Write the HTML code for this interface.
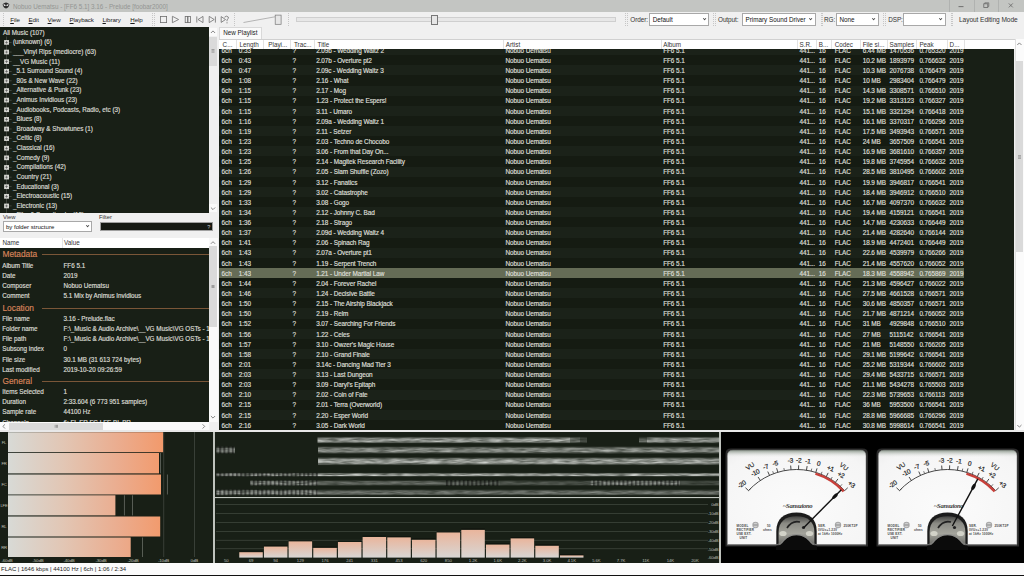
<!DOCTYPE html><html><head><meta charset='utf-8'><style>*{margin:0;padding:0;box-sizing:border-box}
html,body{width:1024px;height:576px;overflow:hidden;background:#f0f0f0;font-family:"Liberation Sans",sans-serif;font-size:6.3px;color:#222;position:relative}
div,span{position:absolute;white-space:nowrap}
.dark{background:#181f16;color:#cfd0c8;overflow:hidden}
#titlebar{left:0;top:0;width:1024px;height:11.5px;background:#c3c5c2}
#title{left:13px;top:2.8px;font-size:6.3px;color:#939593}
.wbtn{top:0;height:11.6px;width:25px;border-left:0.6px solid #b0b2b0}
#toolbar{left:0;top:11.6px;width:1024px;height:15.6px;background:#f0f0f0}
.menu{top:16.0px;font-size:6.2px;color:#1a1a1a;letter-spacing:-0.1px}
.menu u{text-decoration:underline;text-decoration-thickness:0.5px;text-underline-offset:1.3px}
.sep{width:0;top:13px;height:13px;border-left:0.7px dotted #c6c6c6}
.tbicon{top:15.8px}
.lbl{top:15.8px;font-size:6.4px;color:#333;letter-spacing:-0.08px}
.dd{top:13.4px;height:12.2px;background:#fff;border:0.7px solid #a8a8a8;font-size:6.3px;color:#111;padding-left:2.5px;line-height:12.2px}
.dd i{position:absolute;right:2.6px;top:2.6px;width:3.2px;height:3.2px;border-right:0.8px solid #444;border-bottom:0.8px solid #444;transform:rotate(45deg) scale(0.8,0.8);transform-origin:50% 50%}
#tree{left:0;top:27.2px;width:208.5px;height:185.4px}
.ti{font-size:6.3px;color:#d8d9d1}
.pbox{left:4.1px;width:4.9px;height:4.7px;background:#d4d5cf;-webkit-text-stroke:0}
.pbox:before{content:'';position:absolute;left:1.1px;top:2.1px;width:2.7px;height:0.55px;background:#555}
.pbox:after{content:'';position:absolute;left:2.2px;top:1px;width:0.55px;height:2.7px;background:#555}
.tdash{left:9px;width:2.6px;height:0.5px;background:#6a6e66}
.tline{width:0.5px;background:#5e625a}
#props{left:0;top:247.5px;width:208.5px;height:174.5px}
.ph{left:2.5px;font-size:8.3px;color:#d6835a}
.phl{left:42px;width:170px;height:0.7px;background:#7a5638}
.pn{left:2.2px;font-size:6.3px;color:#d8d9d1}
.pv{left:63.5px;font-size:6.3px;color:#d8d9d1}
#pl{left:219px;top:49.2px;width:795.3px;height:380.8px}
.row{left:0;width:745.2px;height:10.133px;background:#1b2219}
.row.odd{background:#151b12}
.row.sel{background:#656c56}
.row span{top:1.8px;font-size:6.4px;color:#dcddd5;letter-spacing:-0.08px}
.sb{background:#f0f0f0}
.thumb{background:#dadada}
.hd{top:41.3px;font-size:6.3px;color:#333}
.hdv{top:40px;width:0.7px;height:9px;background:#e2e2e2}

.dark div,.dark span{-webkit-text-stroke:0.18px currentColor}
</style></head><body>
<div id="titlebar"></div>
<svg style="position:absolute;left:1.5px;top:2.2px" width="8" height="7" viewBox="0 0 8 7"><path d="M0.6 2.2 Q4 -1.2 7.4 2.2 Q7 5.6 4 6.6 Q1 5.6 0.6 2.2Z" fill="#2e2e2e"/><ellipse cx="2.5" cy="3.1" rx="1.2" ry="0.65" fill="#f2f2f2" transform="rotate(30 2.5 3.1)"/><ellipse cx="5.5" cy="3.1" rx="1.2" ry="0.65" fill="#f2f2f2" transform="rotate(-30 5.5 3.1)"/></svg>
<div id="title">Nobuo Uematsu - [FF6 5.1] 3.16 - Prelude [foobar2000]</div>
<div class="wbtn" style="left:949px"></div><div class="wbtn" style="left:974.4px"></div><div class="wbtn" style="left:998.4px;width:25.6px"></div>
<svg style="position:absolute;left:949px;top:0" width="75" height="12" viewBox="0 0 75 12">
 <rect x="9.5" y="6.2" width="5" height="0.9" fill="#666"/>
 <rect x="34.8" y="3.8" width="4" height="3.6" fill="none" stroke="#666" stroke-width="0.8"/><path d="M35.8 3.8 V2.8 H39.8 V6.4 H38.8" fill="none" stroke="#666" stroke-width="0.7"/>
 <path d="M59.8 3.4 L63.8 7.4 M63.8 3.4 L59.8 7.4" stroke="#666" stroke-width="0.8"/>
</svg>
<div id="toolbar"></div>
<div class="sep" style="left:2.5px"></div>
<div class="menu" style="left:10.2px"><u>F</u>ile</div>
<div class="menu" style="left:28.5px"><u>E</u>dit</div>
<div class="menu" style="left:47.6px"><u>V</u>iew</div>
<div class="menu" style="left:69.5px"><u>P</u>layback</div>
<div class="menu" style="left:102.5px"><u>L</u>ibrary</div>
<div class="menu" style="left:130.3px"><u>H</u>elp</div>
<div class="sep" style="left:151.6px"></div><div class="sep" style="left:153.8px"></div>
<svg style="position:absolute;left:158px;top:14px" width="75" height="11" viewBox="0 0 75 11">
 <g fill="none" stroke="#6e6e6e" stroke-width="0.8">
  <rect x="2.4" y="2.4" width="6.2" height="6.2"/>
  <path d="M14.4 2.3 L20.6 5.5 L14.4 8.7 Z"/>
  <rect x="27.2" y="2.4" width="2.4" height="6.2"/><rect x="30.0" y="2.4" width="2.4" height="6.2"/>
  <path d="M38.8 2.4 V8.6 M45 2.4 L40 5.5 L45 8.6 Z"/>
  <path d="M51.2 2.4 L56.2 5.5 L51.2 8.6 Z M57.4 2.4 V8.6"/>
  <path d="M63.2 2.6 L67.5 5.5 L63.2 8.4 Z M66.5 3.2 Q68.5 1.2 70.3 3 Q71 4.6 69 5.7 V7.2 M69 8.2 V9.4"/>
 </g>
</svg>
<div class="sep" style="left:234.3px"></div>
<svg style="position:absolute;left:240px;top:13px" width="45" height="13" viewBox="0 0 45 13"><path d="M3.5 9.5 L35 3.8" stroke="#9a9a9a" stroke-width="0.7"/><rect x="35.2" y="2.1" width="5.9" height="9.2" fill="#e6e6e6" stroke="#777" stroke-width="0.7"/></svg>
<div class="sep" style="left:288.3px"></div>
<div style="left:296.2px;top:17.2px;width:320.3px;height:4.4px;background:#e7e7e7;border:0.7px solid #cfcfcf"></div>
<div style="left:431px;top:15px;width:6.7px;height:9.5px;background:#e6e6e6;border:0.7px solid #777"></div>
<div class="sep" style="left:625.4px"></div><div class="sep" style="left:626.8px"></div>
<div class="lbl" style="left:630.3px">Order:</div>
<div class="dd" style="left:649.3px;width:60.1px">Default<i></i></div>
<div class="sep" style="left:713.3px"></div><div class="sep" style="left:715px"></div>
<div class="lbl" style="left:718px">Output:</div>
<div class="dd" style="left:742px;width:73.5px">Primary Sound Driver<i></i></div>
<div class="sep" style="left:820.5px"></div><div class="sep" style="left:822px"></div>
<div class="lbl" style="left:824px">RG:</div>
<div class="dd" style="left:836px;width:42.8px">None<i></i></div>
<div class="sep" style="left:883px"></div><div class="sep" style="left:884.5px"></div>
<div class="lbl" style="left:888.2px">DSP:</div>
<div class="dd" style="left:903px;width:42.5px"><i></i></div>
<div class="sep" style="left:950.5px"></div><div class="sep" style="left:952px"></div>
<div class="lbl" style="left:959px;font-size:6.6px">Layout Editing Mode</div>
<div id='tree' class='dark'><div class='ti' style='top:1.4px;left:3px'>All Music (107)</div><svg style='position:absolute;left:0;top:0' width='20' height='186' viewBox='0 0 20 186'><rect x='6.25' y='9.5' width='0.55' height='180' fill='#5e625a'/><rect x='4.1' y='13.05' width='4.9' height='4.7' fill='#d4d5cf'/><rect x='5.2' y='15.15' width='2.7' height='0.55' fill='#4a4a4a'/><rect x='6.27' y='14.05' width='0.55' height='2.7' fill='#4a4a4a'/><rect x='9' y='15.15' width='2.6' height='0.5' fill='#6a6e66'/><rect x='4.1' y='22.67' width='4.9' height='4.7' fill='#d4d5cf'/><rect x='5.2' y='24.77' width='2.7' height='0.55' fill='#4a4a4a'/><rect x='6.27' y='23.67' width='0.55' height='2.7' fill='#4a4a4a'/><rect x='9' y='24.77' width='2.6' height='0.5' fill='#6a6e66'/><rect x='4.1' y='32.29' width='4.9' height='4.7' fill='#d4d5cf'/><rect x='5.2' y='34.39' width='2.7' height='0.55' fill='#4a4a4a'/><rect x='6.27' y='33.29' width='0.55' height='2.7' fill='#4a4a4a'/><rect x='9' y='34.39' width='2.6' height='0.5' fill='#6a6e66'/><rect x='4.1' y='41.91' width='4.9' height='4.7' fill='#d4d5cf'/><rect x='5.2' y='44.01' width='2.7' height='0.55' fill='#4a4a4a'/><rect x='6.27' y='42.91' width='0.55' height='2.7' fill='#4a4a4a'/><rect x='9' y='44.01' width='2.6' height='0.5' fill='#6a6e66'/><rect x='4.1' y='51.53' width='4.9' height='4.7' fill='#d4d5cf'/><rect x='5.2' y='53.63' width='2.7' height='0.55' fill='#4a4a4a'/><rect x='6.27' y='52.53' width='0.55' height='2.7' fill='#4a4a4a'/><rect x='9' y='53.63' width='2.6' height='0.5' fill='#6a6e66'/><rect x='4.1' y='61.15' width='4.9' height='4.7' fill='#d4d5cf'/><rect x='5.2' y='63.25' width='2.7' height='0.55' fill='#4a4a4a'/><rect x='6.27' y='62.15' width='0.55' height='2.7' fill='#4a4a4a'/><rect x='9' y='63.25' width='2.6' height='0.5' fill='#6a6e66'/><rect x='4.1' y='70.77' width='4.9' height='4.7' fill='#d4d5cf'/><rect x='5.2' y='72.87' width='2.7' height='0.55' fill='#4a4a4a'/><rect x='6.27' y='71.77' width='0.55' height='2.7' fill='#4a4a4a'/><rect x='9' y='72.87' width='2.6' height='0.5' fill='#6a6e66'/><rect x='4.1' y='80.39' width='4.9' height='4.7' fill='#d4d5cf'/><rect x='5.2' y='82.49' width='2.7' height='0.55' fill='#4a4a4a'/><rect x='6.27' y='81.39' width='0.55' height='2.7' fill='#4a4a4a'/><rect x='9' y='82.49' width='2.6' height='0.5' fill='#6a6e66'/><rect x='4.1' y='90.01' width='4.9' height='4.7' fill='#d4d5cf'/><rect x='5.2' y='92.11' width='2.7' height='0.55' fill='#4a4a4a'/><rect x='6.27' y='91.01' width='0.55' height='2.7' fill='#4a4a4a'/><rect x='9' y='92.11' width='2.6' height='0.5' fill='#6a6e66'/><rect x='4.1' y='99.63' width='4.9' height='4.7' fill='#d4d5cf'/><rect x='5.2' y='101.73' width='2.7' height='0.55' fill='#4a4a4a'/><rect x='6.27' y='100.63' width='0.55' height='2.7' fill='#4a4a4a'/><rect x='9' y='101.73' width='2.6' height='0.5' fill='#6a6e66'/><rect x='4.1' y='109.25' width='4.9' height='4.7' fill='#d4d5cf'/><rect x='5.2' y='111.35' width='2.7' height='0.55' fill='#4a4a4a'/><rect x='6.27' y='110.25' width='0.55' height='2.7' fill='#4a4a4a'/><rect x='9' y='111.35' width='2.6' height='0.5' fill='#6a6e66'/><rect x='4.1' y='118.87' width='4.9' height='4.7' fill='#d4d5cf'/><rect x='5.2' y='120.97' width='2.7' height='0.55' fill='#4a4a4a'/><rect x='6.27' y='119.87' width='0.55' height='2.7' fill='#4a4a4a'/><rect x='9' y='120.97' width='2.6' height='0.5' fill='#6a6e66'/><rect x='4.1' y='128.49' width='4.9' height='4.7' fill='#d4d5cf'/><rect x='5.2' y='130.59' width='2.7' height='0.55' fill='#4a4a4a'/><rect x='6.27' y='129.49' width='0.55' height='2.7' fill='#4a4a4a'/><rect x='9' y='130.59' width='2.6' height='0.5' fill='#6a6e66'/><rect x='4.1' y='138.11' width='4.9' height='4.7' fill='#d4d5cf'/><rect x='5.2' y='140.21' width='2.7' height='0.55' fill='#4a4a4a'/><rect x='6.27' y='139.11' width='0.55' height='2.7' fill='#4a4a4a'/><rect x='9' y='140.21' width='2.6' height='0.5' fill='#6a6e66'/><rect x='4.1' y='147.73' width='4.9' height='4.7' fill='#d4d5cf'/><rect x='5.2' y='149.83' width='2.7' height='0.55' fill='#4a4a4a'/><rect x='6.27' y='148.73' width='0.55' height='2.7' fill='#4a4a4a'/><rect x='9' y='149.83' width='2.6' height='0.5' fill='#6a6e66'/><rect x='4.1' y='157.35' width='4.9' height='4.7' fill='#d4d5cf'/><rect x='5.2' y='159.45' width='2.7' height='0.55' fill='#4a4a4a'/><rect x='6.27' y='158.35' width='0.55' height='2.7' fill='#4a4a4a'/><rect x='9' y='159.45' width='2.6' height='0.5' fill='#6a6e66'/><rect x='4.1' y='166.97' width='4.9' height='4.7' fill='#d4d5cf'/><rect x='5.2' y='169.07' width='2.7' height='0.55' fill='#4a4a4a'/><rect x='6.27' y='167.97' width='0.55' height='2.7' fill='#4a4a4a'/><rect x='9' y='169.07' width='2.6' height='0.5' fill='#6a6e66'/><rect x='4.1' y='176.59' width='4.9' height='4.7' fill='#d4d5cf'/><rect x='5.2' y='178.69' width='2.7' height='0.55' fill='#4a4a4a'/><rect x='6.27' y='177.59' width='0.55' height='2.7' fill='#4a4a4a'/><rect x='9' y='178.69' width='2.6' height='0.5' fill='#6a6e66'/><rect x='4.1' y='186.21' width='4.9' height='4.7' fill='#d4d5cf'/><rect x='5.2' y='188.31' width='2.7' height='0.55' fill='#4a4a4a'/><rect x='6.27' y='187.21' width='0.55' height='2.7' fill='#4a4a4a'/><rect x='9' y='188.31' width='2.6' height='0.5' fill='#6a6e66'/></svg><div class='ti' style='top:11.10px;left:13px'>(unknown) (6)</div><div class='ti' style='top:20.72px;left:13px'>___Vinyl Rips (mediocre) (63)</div><div class='ti' style='top:30.34px;left:13px'>__VG Music (11)</div><div class='ti' style='top:39.96px;left:13px'>_5.1 Surround Sound (4)</div><div class='ti' style='top:49.58px;left:13px'>_80s &amp; New Wave (22)</div><div class='ti' style='top:59.20px;left:13px'>_Alternative &amp; Punk (23)</div><div class='ti' style='top:68.82px;left:13px'>_Animus Invidious (23)</div><div class='ti' style='top:78.44px;left:13px'>_Audiobooks, Podcasts, Radio, etc (3)</div><div class='ti' style='top:88.06px;left:13px'>_Blues (8)</div><div class='ti' style='top:97.68px;left:13px'>_Broadway &amp; Showtunes (1)</div><div class='ti' style='top:107.30px;left:13px'>_Celtic (8)</div><div class='ti' style='top:116.92px;left:13px'>_Classical (16)</div><div class='ti' style='top:126.54px;left:13px'>_Comedy (9)</div><div class='ti' style='top:136.16px;left:13px'>_Compilations (42)</div><div class='ti' style='top:145.78px;left:13px'>_Country (21)</div><div class='ti' style='top:155.40px;left:13px'>_Educational (3)</div><div class='ti' style='top:165.02px;left:13px'>_Electroacoustic (15)</div><div class='ti' style='top:174.64px;left:13px'>_Electronic (13)</div><div class='ti' style='top:184.26px;left:13px'>_Film &amp; Soundtracks (12)</div></div>
<div id='props' class='dark'><div class='ph' style='top:1.60px'>Metadata</div><div class='phl' style='top:6.60px'></div><div class='pn' style='top:14.60px'>Album Title</div><div class='pv' style='top:14.60px'>FF6 5.1</div><div class='pn' style='top:24.70px'>Date</div><div class='pv' style='top:24.70px'>2019</div><div class='pn' style='top:34.80px'>Composer</div><div class='pv' style='top:34.80px'>Nobuo Uematsu</div><div class='pn' style='top:44.90px'>Comment</div><div class='pv' style='top:44.90px'>5.1 Mix by Animus Invidious</div><div class='ph' style='top:55.10px'>Location</div><div class='phl' style='top:60.10px'></div><div class='pn' style='top:67.50px'>File name</div><div class='pv' style='top:67.50px'>3.16 - Prelude.flac</div><div class='pn' style='top:77.60px'>Folder name</div><div class='pv' style='top:77.60px'>F:\_Music &amp; Audio Archive\__VG Music\VG OSTs - 1988 - 199</div><div class='pn' style='top:87.70px'>File path</div><div class='pv' style='top:87.70px'>F:\_Music &amp; Audio Archive\__VG Music\VG OSTs - 1988 - 199</div><div class='pn' style='top:97.90px'>Subsong index</div><div class='pv' style='top:97.90px'>0</div><div class='pn' style='top:108.00px'>File size</div><div class='pv' style='top:108.00px'>30.1 MB (31 613 724 bytes)</div><div class='pn' style='top:118.10px'>Last modified</div><div class='pv' style='top:118.10px'>2019-10-20 09:26:59</div><div class='ph' style='top:128.30px'>General</div><div class='phl' style='top:133.30px'></div><div class='pn' style='top:140.70px'>Items Selected</div><div class='pv' style='top:140.70px'>1</div><div class='pn' style='top:150.80px'>Duration</div><div class='pv' style='top:150.80px'>2:33.604 (6 773 951 samples)</div><div class='pn' style='top:160.90px'>Sample rate</div><div class='pv' style='top:160.90px'>44100 Hz</div><div class='pn' style='top:171.00px'>Channels</div><div class='pv' style='top:171.00px'>6: FL FR FC LFE BL BR</div></div>
<div id='pl' class='dark'><div class='row' style='top:-4.200px'><span style='left:2.6px'>6ch</span><span style='left:19.8px'>0:33</span><span style='left:73.6px'>?</span><span style='left:97.2px'>2.09b - Wedding Waltz 2</span><span style='left:286.5px'>Nobuo Uematsu</span><span style='left:444.2px'>FF6 5.1</span><span style='left:580.5px'>441...</span><span style='left:599.8px'>16</span><span style='left:615.8px'>FLAC</span><span style='left:643.7px'>6.44 MB</span><span style='left:670.6px'>1470536</span><span style='left:700.4px'>0.765320</span><span style='left:730.6px'>2019</span></div><div class='row odd' style='top:5.933px'><span style='left:2.6px'>6ch</span><span style='left:19.8px'>0:43</span><span style='left:73.6px'>?</span><span style='left:97.2px'>2.07b - Overture pt2</span><span style='left:286.5px'>Nobuo Uematsu</span><span style='left:444.2px'>FF6 5.1</span><span style='left:580.5px'>441...</span><span style='left:599.8px'>16</span><span style='left:615.8px'>FLAC</span><span style='left:643.7px'>10.2 MB</span><span style='left:670.6px'>1893979</span><span style='left:700.4px'>0.766632</span><span style='left:730.6px'>2019</span></div><div class='row' style='top:16.066px'><span style='left:2.6px'>6ch</span><span style='left:19.8px'>0:47</span><span style='left:73.6px'>?</span><span style='left:97.2px'>2.09c - Wedding Waltz 3</span><span style='left:286.5px'>Nobuo Uematsu</span><span style='left:444.2px'>FF6 5.1</span><span style='left:580.5px'>441...</span><span style='left:599.8px'>16</span><span style='left:615.8px'>FLAC</span><span style='left:643.7px'>10.3 MB</span><span style='left:670.6px'>2076738</span><span style='left:700.4px'>0.766479</span><span style='left:730.6px'>2019</span></div><div class='row odd' style='top:26.199px'><span style='left:2.6px'>6ch</span><span style='left:19.8px'>1:08</span><span style='left:73.6px'>?</span><span style='left:97.2px'>2.16 - What</span><span style='left:286.5px'>Nobuo Uematsu</span><span style='left:444.2px'>FF6 5.1</span><span style='left:580.5px'>441...</span><span style='left:599.8px'>16</span><span style='left:615.8px'>FLAC</span><span style='left:643.7px'>10 MB</span><span style='left:670.6px'>2983404</span><span style='left:700.4px'>0.766479</span><span style='left:730.6px'>2019</span></div><div class='row' style='top:36.332px'><span style='left:2.6px'>6ch</span><span style='left:19.8px'>1:15</span><span style='left:73.6px'>?</span><span style='left:97.2px'>2.17 - Mog</span><span style='left:286.5px'>Nobuo Uematsu</span><span style='left:444.2px'>FF6 5.1</span><span style='left:580.5px'>441...</span><span style='left:599.8px'>16</span><span style='left:615.8px'>FLAC</span><span style='left:643.7px'>14.3 MB</span><span style='left:670.6px'>3308571</span><span style='left:700.4px'>0.766510</span><span style='left:730.6px'>2019</span></div><div class='row odd' style='top:46.465px'><span style='left:2.6px'>6ch</span><span style='left:19.8px'>1:15</span><span style='left:73.6px'>?</span><span style='left:97.2px'>1.23 - Protect the Espers!</span><span style='left:286.5px'>Nobuo Uematsu</span><span style='left:444.2px'>FF6 5.1</span><span style='left:580.5px'>441...</span><span style='left:599.8px'>16</span><span style='left:615.8px'>FLAC</span><span style='left:643.7px'>19.2 MB</span><span style='left:670.6px'>3313123</span><span style='left:700.4px'>0.766327</span><span style='left:730.6px'>2019</span></div><div class='row' style='top:56.598px'><span style='left:2.6px'>6ch</span><span style='left:19.8px'>1:15</span><span style='left:73.6px'>?</span><span style='left:97.2px'>3.11 - Umaro</span><span style='left:286.5px'>Nobuo Uematsu</span><span style='left:444.2px'>FF6 5.1</span><span style='left:580.5px'>441...</span><span style='left:599.8px'>16</span><span style='left:615.8px'>FLAC</span><span style='left:643.7px'>15.1 MB</span><span style='left:670.6px'>3321294</span><span style='left:700.4px'>0.766418</span><span style='left:730.6px'>2019</span></div><div class='row odd' style='top:66.731px'><span style='left:2.6px'>6ch</span><span style='left:19.8px'>1:16</span><span style='left:73.6px'>?</span><span style='left:97.2px'>2.09a - Wedding Waltz 1</span><span style='left:286.5px'>Nobuo Uematsu</span><span style='left:444.2px'>FF6 5.1</span><span style='left:580.5px'>441...</span><span style='left:599.8px'>16</span><span style='left:615.8px'>FLAC</span><span style='left:643.7px'>16.1 MB</span><span style='left:670.6px'>3370317</span><span style='left:700.4px'>0.766296</span><span style='left:730.6px'>2019</span></div><div class='row' style='top:76.864px'><span style='left:2.6px'>6ch</span><span style='left:19.8px'>1:19</span><span style='left:73.6px'>?</span><span style='left:97.2px'>2.11 - Setzer</span><span style='left:286.5px'>Nobuo Uematsu</span><span style='left:444.2px'>FF6 5.1</span><span style='left:580.5px'>441...</span><span style='left:599.8px'>16</span><span style='left:615.8px'>FLAC</span><span style='left:643.7px'>17.5 MB</span><span style='left:670.6px'>3493943</span><span style='left:700.4px'>0.766571</span><span style='left:730.6px'>2019</span></div><div class='row odd' style='top:86.997px'><span style='left:2.6px'>6ch</span><span style='left:19.8px'>1:23</span><span style='left:73.6px'>?</span><span style='left:97.2px'>2.03 - Techno de Chocobo</span><span style='left:286.5px'>Nobuo Uematsu</span><span style='left:444.2px'>FF6 5.1</span><span style='left:580.5px'>441...</span><span style='left:599.8px'>16</span><span style='left:615.8px'>FLAC</span><span style='left:643.7px'>24 MB</span><span style='left:670.6px'>3657509</span><span style='left:700.4px'>0.766541</span><span style='left:730.6px'>2019</span></div><div class='row' style='top:97.130px'><span style='left:2.6px'>6ch</span><span style='left:19.8px'>1:23</span><span style='left:73.6px'>?</span><span style='left:97.2px'>3.06 - From that Day On...</span><span style='left:286.5px'>Nobuo Uematsu</span><span style='left:444.2px'>FF6 5.1</span><span style='left:580.5px'>441...</span><span style='left:599.8px'>16</span><span style='left:615.8px'>FLAC</span><span style='left:643.7px'>16.9 MB</span><span style='left:670.6px'>3681610</span><span style='left:700.4px'>0.766357</span><span style='left:730.6px'>2019</span></div><div class='row odd' style='top:107.263px'><span style='left:2.6px'>6ch</span><span style='left:19.8px'>1:25</span><span style='left:73.6px'>?</span><span style='left:97.2px'>2.14 - Magitek Research Facility</span><span style='left:286.5px'>Nobuo Uematsu</span><span style='left:444.2px'>FF6 5.1</span><span style='left:580.5px'>441...</span><span style='left:599.8px'>16</span><span style='left:615.8px'>FLAC</span><span style='left:643.7px'>19.8 MB</span><span style='left:670.6px'>3745954</span><span style='left:700.4px'>0.766632</span><span style='left:730.6px'>2019</span></div><div class='row' style='top:117.396px'><span style='left:2.6px'>6ch</span><span style='left:19.8px'>1:26</span><span style='left:73.6px'>?</span><span style='left:97.2px'>2.05 - Slam Shuffle (Zozo)</span><span style='left:286.5px'>Nobuo Uematsu</span><span style='left:444.2px'>FF6 5.1</span><span style='left:580.5px'>441...</span><span style='left:599.8px'>16</span><span style='left:615.8px'>FLAC</span><span style='left:643.7px'>28.5 MB</span><span style='left:670.6px'>3810495</span><span style='left:700.4px'>0.766602</span><span style='left:730.6px'>2019</span></div><div class='row odd' style='top:127.529px'><span style='left:2.6px'>6ch</span><span style='left:19.8px'>1:29</span><span style='left:73.6px'>?</span><span style='left:97.2px'>3.12 - Fanatics</span><span style='left:286.5px'>Nobuo Uematsu</span><span style='left:444.2px'>FF6 5.1</span><span style='left:580.5px'>441...</span><span style='left:599.8px'>16</span><span style='left:615.8px'>FLAC</span><span style='left:643.7px'>19.9 MB</span><span style='left:670.6px'>3946817</span><span style='left:700.4px'>0.766541</span><span style='left:730.6px'>2019</span></div><div class='row' style='top:137.662px'><span style='left:2.6px'>6ch</span><span style='left:19.8px'>1:29</span><span style='left:73.6px'>?</span><span style='left:97.2px'>3.02 - Catastrophe</span><span style='left:286.5px'>Nobuo Uematsu</span><span style='left:444.2px'>FF6 5.1</span><span style='left:580.5px'>441...</span><span style='left:599.8px'>16</span><span style='left:615.8px'>FLAC</span><span style='left:643.7px'>18.4 MB</span><span style='left:670.6px'>3946912</span><span style='left:700.4px'>0.766510</span><span style='left:730.6px'>2019</span></div><div class='row odd' style='top:147.795px'><span style='left:2.6px'>6ch</span><span style='left:19.8px'>1:33</span><span style='left:73.6px'>?</span><span style='left:97.2px'>3.08 - Gogo</span><span style='left:286.5px'>Nobuo Uematsu</span><span style='left:444.2px'>FF6 5.1</span><span style='left:580.5px'>441...</span><span style='left:599.8px'>16</span><span style='left:615.8px'>FLAC</span><span style='left:643.7px'>16.7 MB</span><span style='left:670.6px'>4097370</span><span style='left:700.4px'>0.766632</span><span style='left:730.6px'>2019</span></div><div class='row' style='top:157.928px'><span style='left:2.6px'>6ch</span><span style='left:19.8px'>1:34</span><span style='left:73.6px'>?</span><span style='left:97.2px'>2.12 - Johnny C. Bad</span><span style='left:286.5px'>Nobuo Uematsu</span><span style='left:444.2px'>FF6 5.1</span><span style='left:580.5px'>441...</span><span style='left:599.8px'>16</span><span style='left:615.8px'>FLAC</span><span style='left:643.7px'>19.4 MB</span><span style='left:670.6px'>4159121</span><span style='left:700.4px'>0.766541</span><span style='left:730.6px'>2019</span></div><div class='row odd' style='top:168.061px'><span style='left:2.6px'>6ch</span><span style='left:19.8px'>1:36</span><span style='left:73.6px'>?</span><span style='left:97.2px'>2.18 - Strago</span><span style='left:286.5px'>Nobuo Uematsu</span><span style='left:444.2px'>FF6 5.1</span><span style='left:580.5px'>441...</span><span style='left:599.8px'>16</span><span style='left:615.8px'>FLAC</span><span style='left:643.7px'>14.7 MB</span><span style='left:670.6px'>4230633</span><span style='left:700.4px'>0.766449</span><span style='left:730.6px'>2019</span></div><div class='row' style='top:178.194px'><span style='left:2.6px'>6ch</span><span style='left:19.8px'>1:37</span><span style='left:73.6px'>?</span><span style='left:97.2px'>2.09d - Wedding Waltz 4</span><span style='left:286.5px'>Nobuo Uematsu</span><span style='left:444.2px'>FF6 5.1</span><span style='left:580.5px'>441...</span><span style='left:599.8px'>16</span><span style='left:615.8px'>FLAC</span><span style='left:643.7px'>21.4 MB</span><span style='left:670.6px'>4282640</span><span style='left:700.4px'>0.766144</span><span style='left:730.6px'>2019</span></div><div class='row odd' style='top:188.327px'><span style='left:2.6px'>6ch</span><span style='left:19.8px'>1:41</span><span style='left:73.6px'>?</span><span style='left:97.2px'>2.06 - Spinach Rag</span><span style='left:286.5px'>Nobuo Uematsu</span><span style='left:444.2px'>FF6 5.1</span><span style='left:580.5px'>441...</span><span style='left:599.8px'>16</span><span style='left:615.8px'>FLAC</span><span style='left:643.7px'>18.9 MB</span><span style='left:670.6px'>4472401</span><span style='left:700.4px'>0.766449</span><span style='left:730.6px'>2019</span></div><div class='row' style='top:198.460px'><span style='left:2.6px'>6ch</span><span style='left:19.8px'>1:43</span><span style='left:73.6px'>?</span><span style='left:97.2px'>2.07a - Overture pt1</span><span style='left:286.5px'>Nobuo Uematsu</span><span style='left:444.2px'>FF6 5.1</span><span style='left:580.5px'>441...</span><span style='left:599.8px'>16</span><span style='left:615.8px'>FLAC</span><span style='left:643.7px'>22.6 MB</span><span style='left:670.6px'>4539979</span><span style='left:700.4px'>0.766266</span><span style='left:730.6px'>2019</span></div><div class='row odd' style='top:208.593px'><span style='left:2.6px'>6ch</span><span style='left:19.8px'>1:43</span><span style='left:73.6px'>?</span><span style='left:97.2px'>1.19 - Serpent Trench</span><span style='left:286.5px'>Nobuo Uematsu</span><span style='left:444.2px'>FF6 5.1</span><span style='left:580.5px'>441...</span><span style='left:599.8px'>16</span><span style='left:615.8px'>FLAC</span><span style='left:643.7px'>21.4 MB</span><span style='left:670.6px'>4557620</span><span style='left:700.4px'>0.766052</span><span style='left:730.6px'>2019</span></div><div class='row sel' style='top:218.726px'><span style='left:2.6px'>6ch</span><span style='left:19.8px'>1:43</span><span style='left:73.6px'>?</span><span style='left:97.2px'>1.21 - Under Martial Law</span><span style='left:286.5px'>Nobuo Uematsu</span><span style='left:444.2px'>FF6 5.1</span><span style='left:580.5px'>441...</span><span style='left:599.8px'>16</span><span style='left:615.8px'>FLAC</span><span style='left:643.7px'>18.3 MB</span><span style='left:670.6px'>4558942</span><span style='left:700.4px'>0.765869</span><span style='left:730.6px'>2019</span></div><div class='row odd' style='top:228.859px'><span style='left:2.6px'>6ch</span><span style='left:19.8px'>1:44</span><span style='left:73.6px'>?</span><span style='left:97.2px'>2.04 - Forever Rachel</span><span style='left:286.5px'>Nobuo Uematsu</span><span style='left:444.2px'>FF6 5.1</span><span style='left:580.5px'>441...</span><span style='left:599.8px'>16</span><span style='left:615.8px'>FLAC</span><span style='left:643.7px'>21.3 MB</span><span style='left:670.6px'>4596427</span><span style='left:700.4px'>0.766022</span><span style='left:730.6px'>2019</span></div><div class='row' style='top:238.992px'><span style='left:2.6px'>6ch</span><span style='left:19.8px'>1:46</span><span style='left:73.6px'>?</span><span style='left:97.2px'>1.24 - Decisive Battle</span><span style='left:286.5px'>Nobuo Uematsu</span><span style='left:444.2px'>FF6 5.1</span><span style='left:580.5px'>441...</span><span style='left:599.8px'>16</span><span style='left:615.8px'>FLAC</span><span style='left:643.7px'>27.5 MB</span><span style='left:670.6px'>4661528</span><span style='left:700.4px'>0.766571</span><span style='left:730.6px'>2019</span></div><div class='row odd' style='top:249.125px'><span style='left:2.6px'>6ch</span><span style='left:19.8px'>1:50</span><span style='left:73.6px'>?</span><span style='left:97.2px'>2.15 - The Airship Blackjack</span><span style='left:286.5px'>Nobuo Uematsu</span><span style='left:444.2px'>FF6 5.1</span><span style='left:580.5px'>441...</span><span style='left:599.8px'>16</span><span style='left:615.8px'>FLAC</span><span style='left:643.7px'>30.6 MB</span><span style='left:670.6px'>4850357</span><span style='left:700.4px'>0.766571</span><span style='left:730.6px'>2019</span></div><div class='row' style='top:259.258px'><span style='left:2.6px'>6ch</span><span style='left:19.8px'>1:50</span><span style='left:73.6px'>?</span><span style='left:97.2px'>2.19 - Relm</span><span style='left:286.5px'>Nobuo Uematsu</span><span style='left:444.2px'>FF6 5.1</span><span style='left:580.5px'>441...</span><span style='left:599.8px'>16</span><span style='left:615.8px'>FLAC</span><span style='left:643.7px'>21.7 MB</span><span style='left:670.6px'>4871214</span><span style='left:700.4px'>0.766052</span><span style='left:730.6px'>2019</span></div><div class='row odd' style='top:269.391px'><span style='left:2.6px'>6ch</span><span style='left:19.8px'>1:52</span><span style='left:73.6px'>?</span><span style='left:97.2px'>3.07 - Searching For Friends</span><span style='left:286.5px'>Nobuo Uematsu</span><span style='left:444.2px'>FF6 5.1</span><span style='left:580.5px'>441...</span><span style='left:599.8px'>16</span><span style='left:615.8px'>FLAC</span><span style='left:643.7px'>31 MB</span><span style='left:670.6px'>4929848</span><span style='left:700.4px'>0.766510</span><span style='left:730.6px'>2019</span></div><div class='row' style='top:279.524px'><span style='left:2.6px'>6ch</span><span style='left:19.8px'>1:56</span><span style='left:73.6px'>?</span><span style='left:97.2px'>1.22 - Celes</span><span style='left:286.5px'>Nobuo Uematsu</span><span style='left:444.2px'>FF6 5.1</span><span style='left:580.5px'>441...</span><span style='left:599.8px'>16</span><span style='left:615.8px'>FLAC</span><span style='left:643.7px'>27 MB</span><span style='left:670.6px'>5115142</span><span style='left:700.4px'>0.766541</span><span style='left:730.6px'>2019</span></div><div class='row odd' style='top:289.657px'><span style='left:2.6px'>6ch</span><span style='left:19.8px'>1:57</span><span style='left:73.6px'>?</span><span style='left:97.2px'>3.10 - Owzer's Magic House</span><span style='left:286.5px'>Nobuo Uematsu</span><span style='left:444.2px'>FF6 5.1</span><span style='left:580.5px'>441...</span><span style='left:599.8px'>16</span><span style='left:615.8px'>FLAC</span><span style='left:643.7px'>21 MB</span><span style='left:670.6px'>5148550</span><span style='left:700.4px'>0.766205</span><span style='left:730.6px'>2019</span></div><div class='row' style='top:299.790px'><span style='left:2.6px'>6ch</span><span style='left:19.8px'>1:58</span><span style='left:73.6px'>?</span><span style='left:97.2px'>2.10 - Grand Finale</span><span style='left:286.5px'>Nobuo Uematsu</span><span style='left:444.2px'>FF6 5.1</span><span style='left:580.5px'>441...</span><span style='left:599.8px'>16</span><span style='left:615.8px'>FLAC</span><span style='left:643.7px'>29.1 MB</span><span style='left:670.6px'>5199642</span><span style='left:700.4px'>0.766541</span><span style='left:730.6px'>2019</span></div><div class='row odd' style='top:309.923px'><span style='left:2.6px'>6ch</span><span style='left:19.8px'>2:01</span><span style='left:73.6px'>?</span><span style='left:97.2px'>3.14c - Dancing Mad Tier 3</span><span style='left:286.5px'>Nobuo Uematsu</span><span style='left:444.2px'>FF6 5.1</span><span style='left:580.5px'>441...</span><span style='left:599.8px'>16</span><span style='left:615.8px'>FLAC</span><span style='left:643.7px'>25.2 MB</span><span style='left:670.6px'>5319344</span><span style='left:700.4px'>0.766602</span><span style='left:730.6px'>2019</span></div><div class='row' style='top:320.056px'><span style='left:2.6px'>6ch</span><span style='left:19.8px'>2:03</span><span style='left:73.6px'>?</span><span style='left:97.2px'>3.13 - Last Dungeon</span><span style='left:286.5px'>Nobuo Uematsu</span><span style='left:444.2px'>FF6 5.1</span><span style='left:580.5px'>441...</span><span style='left:599.8px'>16</span><span style='left:615.8px'>FLAC</span><span style='left:643.7px'>29.4 MB</span><span style='left:670.6px'>5433715</span><span style='left:700.4px'>0.766571</span><span style='left:730.6px'>2019</span></div><div class='row odd' style='top:330.189px'><span style='left:2.6px'>6ch</span><span style='left:19.8px'>2:03</span><span style='left:73.6px'>?</span><span style='left:97.2px'>3.09 - Daryl's Epitaph</span><span style='left:286.5px'>Nobuo Uematsu</span><span style='left:444.2px'>FF6 5.1</span><span style='left:580.5px'>441...</span><span style='left:599.8px'>16</span><span style='left:615.8px'>FLAC</span><span style='left:643.7px'>21.1 MB</span><span style='left:670.6px'>5434278</span><span style='left:700.4px'>0.765503</span><span style='left:730.6px'>2019</span></div><div class='row' style='top:340.322px'><span style='left:2.6px'>6ch</span><span style='left:19.8px'>2:10</span><span style='left:73.6px'>?</span><span style='left:97.2px'>2.02 - Coin of Fate</span><span style='left:286.5px'>Nobuo Uematsu</span><span style='left:444.2px'>FF6 5.1</span><span style='left:580.5px'>441...</span><span style='left:599.8px'>16</span><span style='left:615.8px'>FLAC</span><span style='left:643.7px'>22.3 MB</span><span style='left:670.6px'>5739653</span><span style='left:700.4px'>0.766113</span><span style='left:730.6px'>2019</span></div><div class='row odd' style='top:350.455px'><span style='left:2.6px'>6ch</span><span style='left:19.8px'>2:15</span><span style='left:73.6px'>?</span><span style='left:97.2px'>2.01 - Terra (Overworld)</span><span style='left:286.5px'>Nobuo Uematsu</span><span style='left:444.2px'>FF6 5.1</span><span style='left:580.5px'>441...</span><span style='left:599.8px'>16</span><span style='left:615.8px'>FLAC</span><span style='left:643.7px'>36 MB</span><span style='left:670.6px'>5953500</span><span style='left:700.4px'>0.766541</span><span style='left:730.6px'>2019</span></div><div class='row' style='top:360.588px'><span style='left:2.6px'>6ch</span><span style='left:19.8px'>2:15</span><span style='left:73.6px'>?</span><span style='left:97.2px'>2.20 - Esper World</span><span style='left:286.5px'>Nobuo Uematsu</span><span style='left:444.2px'>FF6 5.1</span><span style='left:580.5px'>441...</span><span style='left:599.8px'>16</span><span style='left:615.8px'>FLAC</span><span style='left:643.7px'>28.8 MB</span><span style='left:670.6px'>5966685</span><span style='left:700.4px'>0.766296</span><span style='left:730.6px'>2019</span></div><div class='row odd' style='top:370.721px'><span style='left:2.6px'>6ch</span><span style='left:19.8px'>2:16</span><span style='left:73.6px'>?</span><span style='left:97.2px'>3.05 - Dark World</span><span style='left:286.5px'>Nobuo Uematsu</span><span style='left:444.2px'>FF6 5.1</span><span style='left:580.5px'>441...</span><span style='left:599.8px'>16</span><span style='left:615.8px'>FLAC</span><span style='left:643.7px'>30.8 MB</span><span style='left:670.6px'>5998614</span><span style='left:700.4px'>0.766541</span><span style='left:730.6px'>2019</span></div></div>
<!-- tree scrollbar -->
<div class="sb" style="left:208.5px;top:27.2px;width:9px;height:185.4px;background:#f0f0f0"></div>
<div style="left:208.8px;top:27.6px;width:8.4px;height:8.6px;background:#fafafa"></div>
<div class="thumb" style="left:209.3px;top:36.5px;width:7.8px;height:29px"></div>
<div style="left:208.8px;top:204px;width:8.4px;height:8.4px;background:#fafafa"></div>
<!-- view/filter -->
<div style="left:3px;top:214.3px;font-size:5.8px;color:#333">View</div>
<div class="dd" style="left:3.3px;top:221.3px;width:89.1px;height:11.2px;font-size:6.05px;line-height:10.6px;padding-left:1.6px">by folder structure<i style="top:2.2px"></i></div>
<div style="left:99px;top:214.3px;font-size:5.8px;color:#333">Filter</div>
<div style="left:99.5px;top:221.9px;width:113.7px;height:9.4px;background:#161a14;border:0.8px solid #a0a0a0;color:#ccc;font-size:5.5px"><span style="right:2px;top:1.4px">?</span></div>
<!-- properties header -->
<div style="left:0;top:238px;width:208.5px;height:9.5px;background:#fff"></div>
<div style="left:61.6px;top:238px;width:0.7px;height:9.5px;background:#e4e4e4"></div>
<div style="left:2.5px;top:238.9px;font-size:6.3px;color:#333">Name</div>
<div style="left:64px;top:238.9px;font-size:6.3px;color:#333">Value</div>
<!-- props vscroll -->
<div class="sb" style="left:208.5px;top:238px;width:9px;height:184px;background:#fafafa"></div>
<div class="thumb" style="left:209.3px;top:246.4px;width:7.8px;height:80.6px"></div>
<!-- props hscroll -->
<div class="sb" style="left:0;top:422px;width:208.5px;height:8.8px;background:#fafafa"></div>
<div class="thumb" style="left:9.4px;top:422.6px;width:93.6px;height:7.6px"></div>
<!-- playlist tab -->
<div style="left:218.6px;top:27.3px;width:43px;height:11.7px;background:#fafafa;border:0.7px solid #d9d9d9;border-bottom:none;font-size:6.3px;color:#222;padding:0 0 0 3.6px;line-height:10.4px">New Playlist</div>
<!-- header -->
<div style="left:219px;top:39.3px;width:796px;height:9.9px;background:#fff;border-top:0.7px solid #d0d0d0"></div>
<!-- playlist scrollbar -->
<div class="sb" style="left:1014.7px;top:39.3px;width:9.3px;height:390.7px;background:#fbfbfb;border-left:0.5px solid #e0e0e0"></div>
<div class="thumb" style="left:1015.6px;top:61px;width:7.9px;height:191.2px"></div>
<!-- scrollbar arrows & grips -->
<svg style="position:absolute;left:0;top:0" width="1024" height="576" viewBox="0 0 1024 576">
 <g fill="none" stroke="#606060" stroke-width="0.75">
  <path d="M210.9 33 L213 30.9 L215.1 33"/>
  <path d="M210.9 207.5 L213 209.6 L215.1 207.5"/>
  <path d="M210.9 243.8 L213 241.7 L215.1 243.8"/>
  <path d="M210.9 416 L213 418.1 L215.1 416"/>
  <path d="M5 424.3 L2.9 426.4 L5 428.5"/>
  <path d="M202.6 424.3 L204.7 426.4 L202.6 428.5"/>
  <path d="M1017.3 45 L1019.4 42.9 L1021.5 45"/>
  <path d="M1017.3 425 L1019.4 427.1 L1021.5 425"/>
 </g>
 <g fill="#777">
  <rect x="211.5" y="49.4" width="3" height="0.6"/><rect x="211.5" y="50.6" width="3" height="0.6"/><rect x="211.5" y="51.8" width="3" height="0.6"/>
  <rect x="211.5" y="285" width="3" height="0.6"/><rect x="211.5" y="286.2" width="3" height="0.6"/><rect x="211.5" y="287.4" width="3" height="0.6"/>
  <rect x="1018" y="155.5" width="3" height="0.6"/><rect x="1018" y="156.7" width="3" height="0.6"/><rect x="1018" y="157.9" width="3" height="0.6"/>
  <rect x="54.8" y="424.8" width="0.6" height="3"/><rect x="56" y="424.8" width="0.6" height="3"/><rect x="57.2" y="424.8" width="0.6" height="3"/>
 </g>
</svg>
<!-- separators -->
<div style="left:0;top:430px;width:1024px;height:2px;background:#e8e8e8"></div>
<!-- viz panel -->
<div class="dark" style="left:0;top:432px;width:213px;height:131.4px"></div>
<div style="left:213px;top:432px;width:2px;height:131.4px;background:#bfc3bd"></div>
<div class="dark" style="left:215px;top:432px;width:504px;height:131.4px"></div>
<div style="left:719px;top:432px;width:2px;height:131.4px;background:#bfc3bd"></div>
<div style="left:721px;top:432px;width:303px;height:131.2px;background:#000"></div>
<!-- status bar -->
<div style="left:0;top:563.3px;width:1024px;height:11.3px;background:#fbfbfb"></div>
<div style="left:1px;top:565.8px;font-size:5.95px;color:#222">FLAC | 1646 kbps | 44100 Hz | 6ch | 1:06 / 2:34</div>
<div style="left:0;top:574.6px;width:1024px;height:1.4px;background:#111"></div>
<div class='hd' style='left:222.6px'>C...</div><div class='hd' style='left:239.6px'>Length</div><div class='hd' style='left:268.3px'>Playi...</div><div class='hd' style='left:294.0px'>Trac...</div><div class='hd' style='left:317.6px'>Title</div><div class='hd' style='left:505.8px'>Artist</div><div class='hd' style='left:663.2px'>Album</div><div class='hd' style='left:799.5px'>S.R.</div><div class='hd' style='left:818.8px'>B...</div><div class='hd' style='left:834.8px'>Codec</div><div class='hd' style='left:862.7px'>File si...</div><div class='hd' style='left:889.6px'>Samples</div><div class='hd' style='left:919.4px'>Peak</div><div class='hd' style='left:949.6px'>D...</div><div class='hdv' style='left:236.1px'></div><div class='hdv' style='left:263.0px'></div><div class='hdv' style='left:290.0px'></div><div class='hdv' style='left:314.0px'></div><div class='hdv' style='left:502.6px'></div><div class='hdv' style='left:660.6px'></div><div class='hdv' style='left:796.7px'></div><div class='hdv' style='left:815.7px'></div><div class='hdv' style='left:831.2px'></div><div class='hdv' style='left:859.8px'></div><div class='hdv' style='left:887.2px'></div><div class='hdv' style='left:915.8px'></div><div class='hdv' style='left:946.8px'></div><div class='hdv' style='left:963.5px'></div><svg style='position:absolute;left:0;top:432px' width='213' height='131' viewBox='0 0 213 131'><defs><linearGradient id='pg' gradientUnits='userSpaceOnUse' x1='8' y1='0' x2='194' y2='0'><stop offset='0' stop-color='#d8dad6'/><stop offset='0.3' stop-color='#e2c6b4'/><stop offset='0.6' stop-color='#ebac8e'/><stop offset='0.83' stop-color='#f29a6c'/><stop offset='1' stop-color='#f68c5c'/></linearGradient></defs><rect x='163.45000000000002' y='0' width='0.7' height='125' fill='#474d46'/><rect x='194.15' y='0' width='0.7' height='125' fill='#474d46'/><rect x='8' y='0.2' width='155.1' height='20.0' fill='url(#pg)'/><rect x='8' y='21.0' width='151.0' height='20.4' fill='url(#pg)'/><rect x='8' y='42.5' width='153.0' height='20.0' fill='url(#pg)'/><rect x='8' y='63.3' width='107.4' height='20.1' fill='url(#pg)'/><rect x='8' y='84.5' width='152.2' height='20.0' fill='url(#pg)'/><rect x='8' y='105.5' width='122.69999999999999' height='19.5' fill='url(#pg)'/><rect x='160.05' y='21' width='0.7' height='20.4' fill='#737870'/><rect x='166.95000000000002' y='42.5' width='0.7' height='20' fill='#737870'/><rect x='123.95' y='63.3' width='0.7' height='20.1' fill='#737870'/><rect x='132.05' y='63.3' width='0.7' height='20.1' fill='#737870'/><rect x='142.15' y='105.5' width='0.7' height='19.5' fill='#737870'/><text x='4' y='11.7' font-size='4.2' fill='#c0c0b8' text-anchor='middle' font-family='Liberation Sans' letter-spacing='-0.2'>FL</text><text x='4' y='32.7' font-size='4.2' fill='#c0c0b8' text-anchor='middle' font-family='Liberation Sans' letter-spacing='-0.2'>FR</text><text x='4' y='54.0' font-size='4.2' fill='#c0c0b8' text-anchor='middle' font-family='Liberation Sans' letter-spacing='-0.2'>FC</text><text x='4' y='74.85' font-size='4.2' fill='#c0c0b8' text-anchor='middle' font-family='Liberation Sans' letter-spacing='-0.2'>LFE</text><text x='4' y='96.0' font-size='4.2' fill='#c0c0b8' text-anchor='middle' font-family='Liberation Sans' letter-spacing='-0.2'>RL</text><text x='4' y='116.75' font-size='4.2' fill='#c0c0b8' text-anchor='middle' font-family='Liberation Sans' letter-spacing='-0.2'>RR</text><text x='7' y='130.2' font-size='4.4' fill='#c0c0b8' text-anchor='middle' font-family='Liberation Sans' letter-spacing='-0.15'>-60dB</text><text x='38' y='130.2' font-size='4.4' fill='#c0c0b8' text-anchor='middle' font-family='Liberation Sans' letter-spacing='-0.15'>-50dB</text><text x='69' y='130.2' font-size='4.4' fill='#c0c0b8' text-anchor='middle' font-family='Liberation Sans' letter-spacing='-0.15'>-40dB</text><text x='101' y='130.2' font-size='4.4' fill='#c0c0b8' text-anchor='middle' font-family='Liberation Sans' letter-spacing='-0.15'>-30dB</text><text x='133' y='130.2' font-size='4.4' fill='#c0c0b8' text-anchor='middle' font-family='Liberation Sans' letter-spacing='-0.15'>-20dB</text><text x='163.5' y='130.2' font-size='4.4' fill='#c0c0b8' text-anchor='middle' font-family='Liberation Sans' letter-spacing='-0.15'>-10dB</text><text x='194.3' y='130.2' font-size='4.4' fill='#c0c0b8' text-anchor='middle' font-family='Liberation Sans' letter-spacing='-0.15'>0dB</text></svg>
<svg style='position:absolute;left:215px;top:432px' width='504' height='131' viewBox='0 0 504 131'><defs><linearGradient id='bandv' x1='0' y1='0' x2='0' y2='1'><stop offset='0' stop-color='#fff' stop-opacity='0'/><stop offset='0.5' stop-color='#fff' stop-opacity='1'/><stop offset='1' stop-color='#fff' stop-opacity='0'/></linearGradient><linearGradient id='sg' x1='0' y1='0' x2='0' y2='1'><stop offset='0' stop-color='#e9b59c'/><stop offset='1' stop-color='#d8d6d4'/></linearGradient></defs><defs><filter id='tex' x='0' y='0' width='100%' height='100%' filterUnits='userSpaceOnUse'><feTurbulence type='fractalNoise' baseFrequency='0.08 0.55' numOctaves='2' seed='4' result='n'/><feColorMatrix in='n' type='matrix' values='0 0 0 0 0.72  0 0 0 0 0.74  0 0 0 0 0.71  0.9 0 0 0 0.22' result='m'/><feComposite in='m' in2='SourceGraphic' operator='in'/></filter><pattern id='dots' width='4.2' height='10' patternUnits='userSpaceOnUse'><rect x='0' y='0' width='2.0' height='10' fill='#000' opacity='1'/></pattern><mask id='dmask'><rect x='0' y='0' width='504' height='131' fill='#fff'/></mask><linearGradient id='bv2' x1='0' y1='0' x2='0' y2='1'><stop offset='0' stop-color='#fff' stop-opacity='0.1'/><stop offset='0.3' stop-color='#fff' stop-opacity='0.85'/><stop offset='0.7' stop-color='#fff' stop-opacity='1'/><stop offset='1' stop-color='#fff' stop-opacity='0.1'/></linearGradient></defs><g filter='url(#tex)'><rect x='102.5' y='4.60' width='252.5' height='6.90' fill='url(#bv2)' opacity='0.95'/><rect x='355' y='4.60' width='10' height='6.90' fill='url(#bv2)' opacity='0.6'/><rect x='365' y='4.60' width='7' height='6.90' fill='url(#bv2)' opacity='0.35'/><rect x='424' y='4.60' width='8' height='6.90' fill='url(#bv2)' opacity='0.5'/><rect x='432' y='4.60' width='72' height='6.90' fill='url(#bv2)' opacity='0.9'/><rect x='1' y='14.30' width='19' height='7.50' fill='url(#bv2)' opacity='0.7'/><rect x='103' y='14.30' width='401' height='7.50' fill='url(#bv2)' opacity='0.8'/><rect x='103' y='25.20' width='401' height='8.00' fill='url(#bv2)' opacity='1.0'/><rect x='1' y='40.70' width='102' height='4.00' fill='url(#bv2)' opacity='0.8'/><rect x='103' y='40.70' width='401' height='4.00' fill='url(#bv2)' opacity='1.0'/><rect x='35' y='48.10' width='68' height='5.80' fill='url(#bv2)' opacity='0.8'/><rect x='103' y='48.10' width='127' height='5.80' fill='url(#bv2)' opacity='0.55'/><rect x='230' y='48.10' width='55' height='5.80' fill='url(#bv2)' opacity='0.5'/><rect x='285' y='48.10' width='90' height='5.80' fill='url(#bv2)' opacity='0.4'/><rect x='375' y='48.10' width='90' height='5.80' fill='url(#bv2)' opacity='0.8'/><rect x='465' y='48.10' width='39' height='5.80' fill='url(#bv2)' opacity='0.35'/><rect x='1' y='57.30' width='102' height='6.30' fill='url(#bv2)' opacity='0.85'/><rect x='103' y='57.30' width='401' height='6.30' fill='url(#bv2)' opacity='0.6'/></g><rect x='1' y='14.30' width='19' height='7.50' fill='url(#dots)' opacity='0.45' style='fill:url(#dots)'/><rect x='1' y='40.70' width='102' height='4.00' fill='url(#dots)' opacity='0.45' style='fill:url(#dots)'/><rect x='35' y='48.10' width='68' height='5.80' fill='url(#dots)' opacity='0.45' style='fill:url(#dots)'/><rect x='230' y='48.10' width='55' height='5.80' fill='url(#dots)' opacity='0.45' style='fill:url(#dots)'/><rect x='375' y='48.10' width='90' height='5.80' fill='url(#dots)' opacity='0.45' style='fill:url(#dots)'/><rect x='1' y='57.30' width='102' height='6.30' fill='url(#dots)' opacity='0.45' style='fill:url(#dots)'/><rect x='0' y='65.0' width='504' height='1.1' fill='#c5cac3'/><rect x='1' y='72.30' width='492' height='0.6' fill='#4a5248'/><rect x='1' y='81.00' width='492' height='0.6' fill='#4a5248'/><rect x='1' y='90.10' width='492' height='0.6' fill='#4a5248'/><rect x='1' y='99.00' width='492' height='0.6' fill='#4a5248'/><rect x='1' y='107.90' width='492' height='0.6' fill='#4a5248'/><rect x='1' y='116.50' width='492' height='0.6' fill='#4a5248'/><rect x='24.27' y='120.20' width='23.5' height='5.40' fill='url(#sg)'/><rect x='24.27' y='118.80' width='23.5' height='0.7' fill='#0e120d'/><rect x='48.94' y='114.60' width='23.5' height='11.00' fill='url(#sg)'/><rect x='48.94' y='113.20' width='23.5' height='0.7' fill='#0e120d'/><rect x='73.61' y='109.40' width='23.5' height='16.20' fill='url(#sg)'/><rect x='73.61' y='108.00' width='23.5' height='0.7' fill='#0e120d'/><rect x='98.28' y='115.90' width='23.5' height='9.70' fill='url(#sg)'/><rect x='98.28' y='114.50' width='23.5' height='0.7' fill='#0e120d'/><rect x='122.95' y='110.00' width='23.5' height='15.60' fill='url(#sg)'/><rect x='122.95' y='108.60' width='23.5' height='0.7' fill='#0e120d'/><rect x='147.62' y='105.00' width='23.5' height='20.60' fill='url(#sg)'/><rect x='147.62' y='103.60' width='23.5' height='0.7' fill='#0e120d'/><rect x='172.29' y='105.40' width='23.5' height='20.20' fill='url(#sg)'/><rect x='172.29' y='104.00' width='23.5' height='0.7' fill='#0e120d'/><rect x='196.96' y='107.80' width='23.5' height='17.80' fill='url(#sg)'/><rect x='196.96' y='106.40' width='23.5' height='0.7' fill='#0e120d'/><rect x='221.63' y='100.50' width='23.5' height='25.10' fill='url(#sg)'/><rect x='221.63' y='99.10' width='23.5' height='0.7' fill='#0e120d'/><rect x='246.30' y='97.90' width='23.5' height='27.70' fill='url(#sg)'/><rect x='246.30' y='96.50' width='23.5' height='0.7' fill='#0e120d'/><rect x='270.97' y='112.60' width='23.5' height='13.00' fill='url(#sg)'/><rect x='270.97' y='111.20' width='23.5' height='0.7' fill='#0e120d'/><rect x='295.64' y='106.40' width='23.5' height='19.20' fill='url(#sg)'/><rect x='295.64' y='105.00' width='23.5' height='0.7' fill='#0e120d'/><rect x='320.31' y='113.80' width='23.5' height='11.80' fill='url(#sg)'/><rect x='320.31' y='112.40' width='23.5' height='0.7' fill='#0e120d'/><rect x='344.98' y='123.40' width='23.5' height='2.20' fill='url(#sg)'/><rect x='344.98' y='122.00' width='23.5' height='0.7' fill='#0e120d'/><text x='11.3' y='130.2' font-size='4.3' fill='#b8bdb5' text-anchor='middle' letter-spacing='-0.1' font-family='Liberation Sans'>50</text><text x='36.0' y='130.2' font-size='4.3' fill='#b8bdb5' text-anchor='middle' letter-spacing='-0.1' font-family='Liberation Sans'>69</text><text x='60.6' y='130.2' font-size='4.3' fill='#b8bdb5' text-anchor='middle' letter-spacing='-0.1' font-family='Liberation Sans'>94</text><text x='85.3' y='130.2' font-size='4.3' fill='#b8bdb5' text-anchor='middle' letter-spacing='-0.1' font-family='Liberation Sans'>129</text><text x='110.0' y='130.2' font-size='4.3' fill='#b8bdb5' text-anchor='middle' letter-spacing='-0.1' font-family='Liberation Sans'>176</text><text x='134.6' y='130.2' font-size='4.3' fill='#b8bdb5' text-anchor='middle' letter-spacing='-0.1' font-family='Liberation Sans'>241</text><text x='159.3' y='130.2' font-size='4.3' fill='#b8bdb5' text-anchor='middle' letter-spacing='-0.1' font-family='Liberation Sans'>331</text><text x='184.0' y='130.2' font-size='4.3' fill='#b8bdb5' text-anchor='middle' letter-spacing='-0.1' font-family='Liberation Sans'>453</text><text x='208.7' y='130.2' font-size='4.3' fill='#b8bdb5' text-anchor='middle' letter-spacing='-0.1' font-family='Liberation Sans'>620</text><text x='233.3' y='130.2' font-size='4.3' fill='#b8bdb5' text-anchor='middle' letter-spacing='-0.1' font-family='Liberation Sans'>850</text><text x='258.0' y='130.2' font-size='4.3' fill='#b8bdb5' text-anchor='middle' letter-spacing='-0.1' font-family='Liberation Sans'>1.2K</text><text x='282.7' y='130.2' font-size='4.3' fill='#b8bdb5' text-anchor='middle' letter-spacing='-0.1' font-family='Liberation Sans'>1.6K</text><text x='307.3' y='130.2' font-size='4.3' fill='#b8bdb5' text-anchor='middle' letter-spacing='-0.1' font-family='Liberation Sans'>2.2K</text><text x='332.0' y='130.2' font-size='4.3' fill='#b8bdb5' text-anchor='middle' letter-spacing='-0.1' font-family='Liberation Sans'>3.0K</text><text x='356.7' y='130.2' font-size='4.3' fill='#b8bdb5' text-anchor='middle' letter-spacing='-0.1' font-family='Liberation Sans'>4.1K</text><text x='381.4' y='130.2' font-size='4.3' fill='#b8bdb5' text-anchor='middle' letter-spacing='-0.1' font-family='Liberation Sans'>5.6K</text><text x='406.0' y='130.2' font-size='4.3' fill='#b8bdb5' text-anchor='middle' letter-spacing='-0.1' font-family='Liberation Sans'>7.7K</text><text x='430.7' y='130.2' font-size='4.3' fill='#b8bdb5' text-anchor='middle' letter-spacing='-0.1' font-family='Liberation Sans'>11K</text><text x='455.4' y='130.2' font-size='4.3' fill='#b8bdb5' text-anchor='middle' letter-spacing='-0.1' font-family='Liberation Sans'>14K</text><text x='480.0' y='130.2' font-size='4.3' fill='#b8bdb5' text-anchor='middle' letter-spacing='-0.1' font-family='Liberation Sans'>20K</text><text x='503.5' y='73.9' font-size='4.3' fill='#b8bdb5' text-anchor='end' font-family='Liberation Sans' letter-spacing='-0.15'>0dB</text><text x='503.5' y='83.0' font-size='4.3' fill='#b8bdb5' text-anchor='end' font-family='Liberation Sans' letter-spacing='-0.15'>-10dB</text><text x='503.5' y='92.1' font-size='4.3' fill='#b8bdb5' text-anchor='end' font-family='Liberation Sans' letter-spacing='-0.15'>-20dB</text><text x='503.5' y='101.2' font-size='4.3' fill='#b8bdb5' text-anchor='end' font-family='Liberation Sans' letter-spacing='-0.15'>-30dB</text><text x='503.5' y='110.0' font-size='4.3' fill='#b8bdb5' text-anchor='end' font-family='Liberation Sans' letter-spacing='-0.15'>-40dB</text><text x='503.5' y='118.8' font-size='4.3' fill='#b8bdb5' text-anchor='end' font-family='Liberation Sans' letter-spacing='-0.15'>-50dB</text><text x='503.5' y='127.1' font-size='4.3' fill='#b8bdb5' text-anchor='end' font-family='Liberation Sans' letter-spacing='-0.15'>-60dB</text></svg>
<svg style='position:absolute;left:0;top:0' width='1024' height='576' viewBox='0 0 1024 576'><defs><radialGradient id='face' cx='0.5' cy='0.6' r='0.8'><stop offset='0' stop-color='#fbfbfb'/><stop offset='0.8' stop-color='#f5f5f5'/><stop offset='1' stop-color='#ececec'/></radialGradient><linearGradient id='topshade' x1='0' y1='0' x2='0' y2='1'><stop offset='0' stop-color='#607060' stop-opacity='0.7'/><stop offset='1' stop-color='#fff' stop-opacity='0'/></linearGradient><linearGradient id='mech' x1='0' y1='0' x2='0' y2='1'><stop offset='0' stop-color='#444442'/><stop offset='0.25' stop-color='#8a8a84'/><stop offset='0.6' stop-color='#a4a49c'/><stop offset='1' stop-color='#6a6a66'/></linearGradient></defs><g transform='translate(0,0)'><path d='M731 448.6 H862.5 Q868 448.6 868 454 V546.4 H725.5 V454 Q725.5 448.6 731 448.6Z' fill='#2a2a2a'/><path d='M733 450.2 H860.5 Q866 450.2 866 456 V544.5 H812.5 Q806 535 796.5 535 Q787 535 780.5 544.5 H727.3 V456 Q727.3 450.2 733 450.2Z' fill='url(#face)' stroke='#6a6a6a' stroke-width='0.5'/><path d='M733 450.2 H860.5 Q866 450.2 866 456 V458 H727.3 V456 Q727.3 450.2 733 450.2Z' fill='url(#topshade)'/><path d='M748.53 490.60 A65.3 65.3 0 0 1 844.67 490.60' fill='none' stroke='#333' stroke-width='0.9'/><path d='M815.42 473.63 A64.0 64.0 0 0 1 843.71 491.48' fill='none' stroke='#c8403a' stroke-width='2.6'/><line x1='748.53' y1='490.60' x2='745.44' y2='487.76' stroke='#333' stroke-width='0.9'/><line x1='760.37' y1='480.47' x2='758.04' y2='476.98' stroke='#333' stroke-width='0.9'/><line x1='769.52' y1='475.38' x2='767.78' y2='471.56' stroke='#333' stroke-width='0.9'/><line x1='777.84' y1='472.25' x2='776.63' y2='468.23' stroke='#333' stroke-width='0.9'/><line x1='791.02' y1='469.74' x2='790.66' y2='465.55' stroke='#333' stroke-width='0.9'/><line x1='798.54' y1='469.53' x2='798.66' y2='465.33' stroke='#333' stroke-width='0.9'/><line x1='806.48' y1='470.25' x2='807.11' y2='466.10' stroke='#333' stroke-width='0.9'/><line x1='815.80' y1='472.39' x2='817.04' y2='468.37' stroke='#333' stroke-width='0.9'/><line x1='826.25' y1='476.62' x2='828.15' y2='472.88' stroke='#333' stroke-width='0.9'/><line x1='835.44' y1='482.31' x2='837.94' y2='478.93' stroke='#333' stroke-width='0.9'/><line x1='844.67' y1='490.60' x2='847.76' y2='487.76' stroke='#333' stroke-width='0.9'/><line x1='773.62' y1='473.68' x2='772.71' y2='471.24' stroke='#444' stroke-width='0.75'/><line x1='784.36' y1='470.66' x2='783.88' y2='468.10' stroke='#444' stroke-width='0.75'/><line x1='811.18' y1='471.15' x2='811.76' y2='468.61' stroke='#444' stroke-width='0.75'/><line x1='821.06' y1='474.25' x2='822.04' y2='471.84' stroke='#444' stroke-width='0.75'/><line x1='830.91' y1='479.24' x2='832.28' y2='477.03' stroke='#444' stroke-width='0.75'/><line x1='840.29' y1='486.27' x2='842.03' y2='484.34' stroke='#444' stroke-width='0.75'/><line x1='748.53' y1='490.60' x2='751.03' y2='488.30' stroke='#333' stroke-width='0.6'/><text x='741.69' y='486.51' font-size='6.5' fill='#2a2a2a' stroke='#2a2a2a' stroke-width='0.22' text-anchor='middle' font-family='Liberation Sans' letter-spacing='-0.25' transform='rotate(-35.5 741.69 484.31)'>-20</text><text x='755.21' y='474.94' font-size='6.5' fill='#2a2a2a' stroke='#2a2a2a' stroke-width='0.22' text-anchor='middle' font-family='Liberation Sans' letter-spacing='-0.25' transform='rotate(-25.3 755.21 472.74)'>-10</text><text x='765.66' y='469.12' font-size='6.5' fill='#2a2a2a' stroke='#2a2a2a' stroke-width='0.22' text-anchor='middle' font-family='Liberation Sans' letter-spacing='-0.25' transform='rotate(-18.4 765.66 466.92)'>-7</text><text x='775.16' y='465.55' font-size='6.5' fill='#2a2a2a' stroke='#2a2a2a' stroke-width='0.22' text-anchor='middle' font-family='Liberation Sans' letter-spacing='-0.25' transform='rotate(-12.5 775.16 463.35)'>-5</text><text x='790.23' y='462.67' font-size='6.5' fill='#2a2a2a' stroke='#2a2a2a' stroke-width='0.22' text-anchor='middle' font-family='Liberation Sans' letter-spacing='-0.25' transform='rotate(-3.7 790.23 460.47)'>-3</text><text x='798.81' y='462.43' font-size='6.5' fill='#2a2a2a' stroke='#2a2a2a' stroke-width='0.22' text-anchor='middle' font-family='Liberation Sans' letter-spacing='-0.25' transform='rotate(1.3 798.81 460.23)'>-2</text><text x='807.88' y='463.26' font-size='6.5' fill='#2a2a2a' stroke='#2a2a2a' stroke-width='0.22' text-anchor='middle' font-family='Liberation Sans' letter-spacing='-0.25' transform='rotate(6.5 807.88 461.06)'>-1</text><text x='818.54' y='465.70' font-size='6.5' fill='#2a2a2a' stroke='#2a2a2a' stroke-width='0.22' text-anchor='middle' font-family='Liberation Sans' letter-spacing='-0.25' transform='rotate(12.8 818.54 463.50)'>0</text><text x='830.47' y='470.53' font-size='6.5' fill='#2a2a2a' stroke='#2a2a2a' stroke-width='0.22' text-anchor='middle' font-family='Liberation Sans' letter-spacing='-0.25' transform='rotate(20.2 830.47 468.33)'>+1</text><text x='840.97' y='477.03' font-size='6.5' fill='#2a2a2a' stroke='#2a2a2a' stroke-width='0.22' text-anchor='middle' font-family='Liberation Sans' letter-spacing='-0.25' transform='rotate(27.4 840.97 474.83)'>+2</text><text x='851.51' y='486.51' font-size='6.5' fill='#2a2a2a' stroke='#2a2a2a' stroke-width='0.22' text-anchor='middle' font-family='Liberation Sans' letter-spacing='-0.25' transform='rotate(35.5 851.51 484.31)'>+3</text><text x='750.30' y='468.16' font-size='6.4' fill='#2a2a2a' stroke='#2a2a2a' stroke-width='0.15' text-anchor='middle' font-family='Liberation Sans' transform='rotate(-35.7 750.30 466.16)'>VU</text><text x='843.74' y='468.73' font-size='6.4' fill='#2a2a2a' stroke='#2a2a2a' stroke-width='0.15' text-anchor='middle' font-family='Liberation Sans' transform='rotate(36.4 843.74 466.73)'>VU</text><text x='797.5' y='507.5' font-size='6.6' fill='#3a3a3a' text-anchor='middle' font-family='Liberation Serif' font-style='italic' font-weight='bold' letter-spacing='-0.3'>~Sansuiono</text><text x='736.5' y='527.3' font-size='3.1' fill='#4a4a4a' font-weight='bold' font-family='Liberation Sans' letter-spacing='0.15'>MODEL</text><text x='736.5' y='531.1' font-size='3.1' fill='#4a4a4a' font-weight='bold' font-family='Liberation Sans' letter-spacing='0.15'>RECTIFIER</text><text x='736.5' y='534.9' font-size='3.1' fill='#4a4a4a' font-weight='bold' font-family='Liberation Sans' letter-spacing='0.15'>USE EXT.</text><text x='739.5' y='538.7' font-size='3.1' fill='#4a4a4a' font-weight='bold' font-family='Liberation Sans' letter-spacing='0.15'>UNIT</text><text x='767' y='527.3' font-size='3.1' fill='#4a4a4a' font-weight='bold' font-family='Liberation Sans' letter-spacing='0.15'>50</text><text x='763' y='531.1' font-size='3.1' fill='#4a4a4a' font-weight='bold' font-family='Liberation Sans' letter-spacing='0.15'>ohms</text><text x='818' y='527' font-size='3.1' fill='#4a4a4a' font-weight='bold' font-family='Liberation Sans' letter-spacing='0.15'>SER.</text><text x='818' y='531' font-size='3.1' fill='#4a4a4a' font-weight='bold' font-family='Liberation Sans' letter-spacing='0.15'>0VU=+1.23V</text><text x='818' y='535' font-size='3.1' fill='#4a4a4a' font-weight='bold' font-family='Liberation Sans' letter-spacing='0.15' font-size='2.7'>at 1kHz 1000Hz</text><text x='843.5' y='527' font-size='3.1' fill='#4a4a4a' font-weight='bold' font-family='Liberation Sans' letter-spacing='0.15'>250KT2P</text><circle cx='755.5' cy='525' r='3.2' fill='#a8a8a8'/><circle cx='755.5' cy='525' r='2.2' fill='#cfcfcf'/><rect x='753.2' y='524.6' width='4.6' height='0.8' fill='#777'/><circle cx='838' cy='525' r='3.2' fill='#a8a8a8'/><circle cx='838' cy='525' r='2.2' fill='#cfcfcf'/><rect x='835.7' y='524.6' width='4.6' height='0.8' fill='#777'/><path d='M776.3 545 V531 C776.3 519 784 512.5 796.5 512.5 C809 512.5 816.7 519 816.7 531 V545Z' fill='#1c1c1c'/><path d='M778.6 545 V532 C778.6 522 785 516.2 796.5 516.2 C808 516.2 814.4 522 814.4 532 V545Z' fill='url(#mech)'/><path d='M787 528 Q792 520 800 522' stroke='#222' stroke-width='1.6' fill='none'/><ellipse cx='783' cy='533.5' rx='3.6' ry='2.6' fill='#d2d2c8'/><ellipse cx='809.5' cy='533.5' rx='3.6' ry='2.6' fill='#d2d2c8'/><circle cx='803.5' cy='527.5' r='1.6' fill='#222'/><path d='M776 546 Q781 546 784 541 Q789 535.3 796.5 535.3 Q804 535.3 809 541 Q812 546 817 546 V550 H776Z' fill='#0b0b0b'/><path d='M727.3 544.8 H776 Q781 544.8 784 540.2 Q789 534.6 796.5 534.6 Q804 534.6 809 540.2 Q812 544.8 817 544.8 H866' fill='none' stroke='#8a8a8a' stroke-width='0.8'/><line x1='803.65' y1='527.70' x2='841.34' y2='489.74' stroke='#111' stroke-width='1.4'/><ellipse cx='835.00' cy='496.13' rx='1.7' ry='3.4' fill='#111' transform='rotate(44.8 835.00 496.13)'/></g><g transform='translate(151,0)'><path d='M731 448.6 H862.5 Q868 448.6 868 454 V546.4 H725.5 V454 Q725.5 448.6 731 448.6Z' fill='#2a2a2a'/><path d='M733 450.2 H860.5 Q866 450.2 866 456 V544.5 H812.5 Q806 535 796.5 535 Q787 535 780.5 544.5 H727.3 V456 Q727.3 450.2 733 450.2Z' fill='url(#face)' stroke='#6a6a6a' stroke-width='0.5'/><path d='M733 450.2 H860.5 Q866 450.2 866 456 V458 H727.3 V456 Q727.3 450.2 733 450.2Z' fill='url(#topshade)'/><path d='M748.53 490.60 A65.3 65.3 0 0 1 844.67 490.60' fill='none' stroke='#333' stroke-width='0.9'/><path d='M815.42 473.63 A64.0 64.0 0 0 1 843.71 491.48' fill='none' stroke='#c8403a' stroke-width='2.6'/><line x1='748.53' y1='490.60' x2='745.44' y2='487.76' stroke='#333' stroke-width='0.9'/><line x1='760.37' y1='480.47' x2='758.04' y2='476.98' stroke='#333' stroke-width='0.9'/><line x1='769.52' y1='475.38' x2='767.78' y2='471.56' stroke='#333' stroke-width='0.9'/><line x1='777.84' y1='472.25' x2='776.63' y2='468.23' stroke='#333' stroke-width='0.9'/><line x1='791.02' y1='469.74' x2='790.66' y2='465.55' stroke='#333' stroke-width='0.9'/><line x1='798.54' y1='469.53' x2='798.66' y2='465.33' stroke='#333' stroke-width='0.9'/><line x1='806.48' y1='470.25' x2='807.11' y2='466.10' stroke='#333' stroke-width='0.9'/><line x1='815.80' y1='472.39' x2='817.04' y2='468.37' stroke='#333' stroke-width='0.9'/><line x1='826.25' y1='476.62' x2='828.15' y2='472.88' stroke='#333' stroke-width='0.9'/><line x1='835.44' y1='482.31' x2='837.94' y2='478.93' stroke='#333' stroke-width='0.9'/><line x1='844.67' y1='490.60' x2='847.76' y2='487.76' stroke='#333' stroke-width='0.9'/><line x1='773.62' y1='473.68' x2='772.71' y2='471.24' stroke='#444' stroke-width='0.75'/><line x1='784.36' y1='470.66' x2='783.88' y2='468.10' stroke='#444' stroke-width='0.75'/><line x1='811.18' y1='471.15' x2='811.76' y2='468.61' stroke='#444' stroke-width='0.75'/><line x1='821.06' y1='474.25' x2='822.04' y2='471.84' stroke='#444' stroke-width='0.75'/><line x1='830.91' y1='479.24' x2='832.28' y2='477.03' stroke='#444' stroke-width='0.75'/><line x1='840.29' y1='486.27' x2='842.03' y2='484.34' stroke='#444' stroke-width='0.75'/><line x1='748.53' y1='490.60' x2='751.03' y2='488.30' stroke='#333' stroke-width='0.6'/><text x='741.69' y='486.51' font-size='6.5' fill='#2a2a2a' stroke='#2a2a2a' stroke-width='0.22' text-anchor='middle' font-family='Liberation Sans' letter-spacing='-0.25' transform='rotate(-35.5 741.69 484.31)'>-20</text><text x='755.21' y='474.94' font-size='6.5' fill='#2a2a2a' stroke='#2a2a2a' stroke-width='0.22' text-anchor='middle' font-family='Liberation Sans' letter-spacing='-0.25' transform='rotate(-25.3 755.21 472.74)'>-10</text><text x='765.66' y='469.12' font-size='6.5' fill='#2a2a2a' stroke='#2a2a2a' stroke-width='0.22' text-anchor='middle' font-family='Liberation Sans' letter-spacing='-0.25' transform='rotate(-18.4 765.66 466.92)'>-7</text><text x='775.16' y='465.55' font-size='6.5' fill='#2a2a2a' stroke='#2a2a2a' stroke-width='0.22' text-anchor='middle' font-family='Liberation Sans' letter-spacing='-0.25' transform='rotate(-12.5 775.16 463.35)'>-5</text><text x='790.23' y='462.67' font-size='6.5' fill='#2a2a2a' stroke='#2a2a2a' stroke-width='0.22' text-anchor='middle' font-family='Liberation Sans' letter-spacing='-0.25' transform='rotate(-3.7 790.23 460.47)'>-3</text><text x='798.81' y='462.43' font-size='6.5' fill='#2a2a2a' stroke='#2a2a2a' stroke-width='0.22' text-anchor='middle' font-family='Liberation Sans' letter-spacing='-0.25' transform='rotate(1.3 798.81 460.23)'>-2</text><text x='807.88' y='463.26' font-size='6.5' fill='#2a2a2a' stroke='#2a2a2a' stroke-width='0.22' text-anchor='middle' font-family='Liberation Sans' letter-spacing='-0.25' transform='rotate(6.5 807.88 461.06)'>-1</text><text x='818.54' y='465.70' font-size='6.5' fill='#2a2a2a' stroke='#2a2a2a' stroke-width='0.22' text-anchor='middle' font-family='Liberation Sans' letter-spacing='-0.25' transform='rotate(12.8 818.54 463.50)'>0</text><text x='830.47' y='470.53' font-size='6.5' fill='#2a2a2a' stroke='#2a2a2a' stroke-width='0.22' text-anchor='middle' font-family='Liberation Sans' letter-spacing='-0.25' transform='rotate(20.2 830.47 468.33)'>+1</text><text x='840.97' y='477.03' font-size='6.5' fill='#2a2a2a' stroke='#2a2a2a' stroke-width='0.22' text-anchor='middle' font-family='Liberation Sans' letter-spacing='-0.25' transform='rotate(27.4 840.97 474.83)'>+2</text><text x='851.51' y='486.51' font-size='6.5' fill='#2a2a2a' stroke='#2a2a2a' stroke-width='0.22' text-anchor='middle' font-family='Liberation Sans' letter-spacing='-0.25' transform='rotate(35.5 851.51 484.31)'>+3</text><text x='750.30' y='468.16' font-size='6.4' fill='#2a2a2a' stroke='#2a2a2a' stroke-width='0.15' text-anchor='middle' font-family='Liberation Sans' transform='rotate(-35.7 750.30 466.16)'>VU</text><text x='843.74' y='468.73' font-size='6.4' fill='#2a2a2a' stroke='#2a2a2a' stroke-width='0.15' text-anchor='middle' font-family='Liberation Sans' transform='rotate(36.4 843.74 466.73)'>VU</text><text x='797.5' y='507.5' font-size='6.6' fill='#3a3a3a' text-anchor='middle' font-family='Liberation Serif' font-style='italic' font-weight='bold' letter-spacing='-0.3'>~Sansuiono</text><text x='736.5' y='527.3' font-size='3.1' fill='#4a4a4a' font-weight='bold' font-family='Liberation Sans' letter-spacing='0.15'>MODEL</text><text x='736.5' y='531.1' font-size='3.1' fill='#4a4a4a' font-weight='bold' font-family='Liberation Sans' letter-spacing='0.15'>RECTIFIER</text><text x='736.5' y='534.9' font-size='3.1' fill='#4a4a4a' font-weight='bold' font-family='Liberation Sans' letter-spacing='0.15'>USE EXT.</text><text x='739.5' y='538.7' font-size='3.1' fill='#4a4a4a' font-weight='bold' font-family='Liberation Sans' letter-spacing='0.15'>UNIT</text><text x='767' y='527.3' font-size='3.1' fill='#4a4a4a' font-weight='bold' font-family='Liberation Sans' letter-spacing='0.15'>50</text><text x='763' y='531.1' font-size='3.1' fill='#4a4a4a' font-weight='bold' font-family='Liberation Sans' letter-spacing='0.15'>ohms</text><text x='818' y='527' font-size='3.1' fill='#4a4a4a' font-weight='bold' font-family='Liberation Sans' letter-spacing='0.15'>SER.</text><text x='818' y='531' font-size='3.1' fill='#4a4a4a' font-weight='bold' font-family='Liberation Sans' letter-spacing='0.15'>0VU=+1.23V</text><text x='818' y='535' font-size='3.1' fill='#4a4a4a' font-weight='bold' font-family='Liberation Sans' letter-spacing='0.15' font-size='2.7'>at 1kHz 1000Hz</text><text x='843.5' y='527' font-size='3.1' fill='#4a4a4a' font-weight='bold' font-family='Liberation Sans' letter-spacing='0.15'>250KT2P</text><circle cx='755.5' cy='525' r='3.2' fill='#a8a8a8'/><circle cx='755.5' cy='525' r='2.2' fill='#cfcfcf'/><rect x='753.2' y='524.6' width='4.6' height='0.8' fill='#777'/><circle cx='838' cy='525' r='3.2' fill='#a8a8a8'/><circle cx='838' cy='525' r='2.2' fill='#cfcfcf'/><rect x='835.7' y='524.6' width='4.6' height='0.8' fill='#777'/><path d='M776.3 545 V531 C776.3 519 784 512.5 796.5 512.5 C809 512.5 816.7 519 816.7 531 V545Z' fill='#1c1c1c'/><path d='M778.6 545 V532 C778.6 522 785 516.2 796.5 516.2 C808 516.2 814.4 522 814.4 532 V545Z' fill='url(#mech)'/><path d='M787 528 Q792 520 800 522' stroke='#222' stroke-width='1.6' fill='none'/><ellipse cx='783' cy='533.5' rx='3.6' ry='2.6' fill='#d2d2c8'/><ellipse cx='809.5' cy='533.5' rx='3.6' ry='2.6' fill='#d2d2c8'/><circle cx='803.5' cy='527.5' r='1.6' fill='#222'/><path d='M776 546 Q781 546 784 541 Q789 535.3 796.5 535.3 Q804 535.3 809 541 Q812 546 817 546 V550 H776Z' fill='#0b0b0b'/><path d='M727.3 544.8 H776 Q781 544.8 784 540.2 Q789 534.6 796.5 534.6 Q804 534.6 809 540.2 Q812 544.8 817 544.8 H866' fill='none' stroke='#8a8a8a' stroke-width='0.8'/><line x1='801.36' y1='526.00' x2='826.80' y2='478.94' stroke='#111' stroke-width='1.4'/><ellipse cx='822.52' cy='486.86' rx='1.7' ry='3.4' fill='#111' transform='rotate(28.4 822.52 486.86)'/></g></svg>
</body></html>
